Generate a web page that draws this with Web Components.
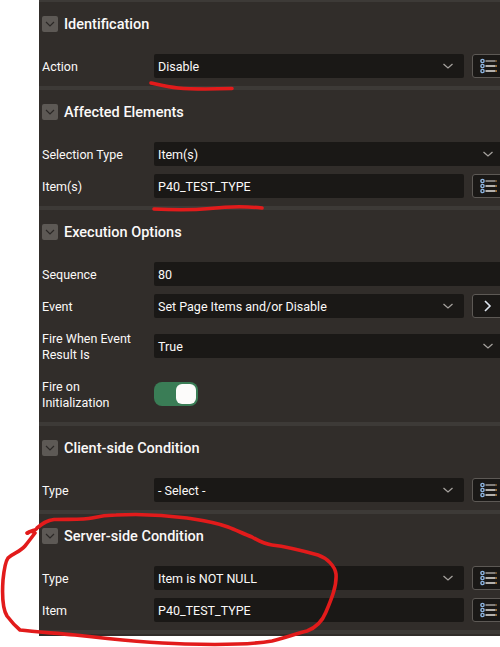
<!DOCTYPE html>
<html lang="en">
<head>
<meta charset="utf-8">
<title>Property Editor</title>
<style>
  html, body { margin: 0; height: 100%; background: #fff; overflow: hidden; }
  body { font-family: Roboto, "Noto Sans", sans-serif; font-size: 12.5px; color: #fbf9f8; position: relative; }
</style>
</head>
<body>
<prop-panel>
  <prop-section title="Identification">
    <prop-row label="Action"><prop-field value="Disable" select action="list"></prop-field></prop-row>
  </prop-section>
  <prop-section title="Affected Elements">
    <prop-row label="Selection Type"><prop-field value="Item(s)" select></prop-field></prop-row>
    <prop-row label="Item(s)"><prop-field value="P40_TEST_TYPE" action="list"></prop-field></prop-row>
  </prop-section>
  <prop-section title="Execution Options">
    <prop-row label="Sequence"><prop-field value="80"></prop-field></prop-row>
    <prop-row label="Event"><prop-field value="Set Page Items and/or Disable" select action="more"></prop-field></prop-row>
    <prop-row tall label="Fire When Event Result Is"><prop-field value="True" select></prop-field></prop-row>
    <prop-row tall label="Fire on Initialization"><prop-switch></prop-switch></prop-row>
  </prop-section>
  <prop-section title="Client-side Condition">
    <prop-row label="Type"><prop-field value="- Select -" select action="list"></prop-field></prop-row>
  </prop-section>
  <prop-section title="Server-side Condition">
    <prop-row label="Type"><prop-field value="Item is NOT NULL" select action="list"></prop-field></prop-row>
    <prop-row label="Item"><prop-field value="P40_TEST_TYPE" action="list"></prop-field></prop-row>
  </prop-section>
</prop-panel>
<red-marks></red-marks>

<script>
class PropPanel extends HTMLElement {
  constructor() {
    super();
    this.attachShadow({ mode: 'open' });
    this.shadowRoot.innerHTML = `
      <style>
        :host {
          display: block;
          width: 465px;
          height: 636px;
          margin-left: 39px;
          background: #312d2a;
          border-top: 2px solid #3d3a37;
          box-sizing: border-box;
        }
      </style>
      <slot></slot>
    `;
  }
}

class PropSection extends HTMLElement {
  constructor() {
    super();
    this.attachShadow({ mode: 'open' });
  }

  connectedCallback() {
    this.shadowRoot.innerHTML = `
      <style>
        :host {
          display: block;
          padding-bottom: 4px;
          border-bottom: 4px solid #3d3a37;
        }
        header {
          display: flex;
          align-items: center;
          gap: 6px;
          height: 16px;
          padding: 14px 0 18px 3px;
        }
        .toggle {
          width: 16px;
          height: 16px;
          border-radius: 2px;
          background: #5d5955;
          display: flex;
          align-items: center;
          justify-content: center;
        }
        h2 {
          margin: 0;
          padding-top: 2px;
          font-size: 14.5px;
          line-height: 16px;
          font-weight: 500;
          color: #fbf9f8;
        }
      </style>
      <header>
        <div class="toggle">
          <svg width="16" height="16" viewBox="0 0 16 16" fill="none" stroke="#2b2826" stroke-width="1.2">
            <path d="M4 6l4 4 4-4"/>
          </svg>
        </div>
        <h2>${this.getAttribute('title')}</h2>
      </header>
      <slot></slot>
    `;
  }
}

class PropRow extends HTMLElement {
  constructor() {
    super();
    this.attachShadow({ mode: 'open' });
  }

  connectedCallback() {
    this.shadowRoot.innerHTML = `
      <style>
        :host {
          display: flex;
          align-items: center;
          padding: 4px 0 4px 3px;
        }
        :host([tall]) { min-height: 40px; }
        label {
          flex: 0 0 112px;
          width: 112px;
          padding: 2px 8px 0 0;
          line-height: 16px;
          box-sizing: border-box;
        }
        .control { flex: 1; min-width: 0; }
      </style>
      <label>${this.getAttribute('label')}</label>
      <div class="control"><slot></slot></div>
    `;
  }
}

class PropField extends HTMLElement {
  constructor() {
    super();
    this.attachShadow({ mode: 'open' });
  }

  connectedCallback() {
    const action = this.getAttribute('action');
    this.shadowRoot.innerHTML = `
      <style>
        :host { display: flex; gap: 8px; height: 24px; }
        .input {
          flex: 1;
          display: flex;
          align-items: center;
          justify-content: space-between;
          padding: 0 10px 0 4px;
          background: #1a1816;
          border-radius: 2px;
        }
        svg { display: block; flex: none; }
        button {
          flex: 0 0 32px;
          width: 32px;
          height: 24px;
          padding: 0 0 0 7px;
          background: #1a1816;
          border: 1px solid #5d5955;
          border-radius: 3px;
          box-sizing: border-box;
        }
      </style>
      <div class="input">
        <span>${this.getAttribute('value')}</span>
        ${this.hasAttribute('select') ? this._chevron() : ''}
      </div>
      ${action ? `<button aria-label="${action}">${action === 'list' ? this._listIcon() : this._moreIcon()}</button>` : ''}
    `;
  }

  _chevron() {
    return `<svg width="12" height="12" viewBox="0 0 12 12" fill="none" stroke="#a5a19d" stroke-width="1.3">
      <path d="M1.500 4L6 8l4.500-4"/>
    </svg>`;
  }

  _listIcon() {
    const rows = [3, 8, 13].map((y) => `
      <circle cx="2.500" cy="${y}" r="1.600" stroke="#8fb6e2" stroke-width="1.400" fill="#1a1816"/>
      <path d="M5.500 ${y}h10" stroke="#e8e4e0" stroke-width="${y === 3 ? 1 : 1.500}"/>
      <path d="M15.500 ${y}h1.500" stroke="#c98a3c" stroke-width="${y === 3 ? 1 : 1.500}"/>
    `).join('');
    return `<svg width="17" height="16" viewBox="0 0 17 16">${rows}</svg>`;
  }

  _moreIcon() {
    return `<svg width="16" height="16" viewBox="0 0 16 16" fill="none" stroke="#dfe6f0" stroke-width="1.600">
      <path d="M5 3l5 5-5 5"/>
    </svg>`;
  }
}

class PropSwitch extends HTMLElement {
  constructor() {
    super();
    this.attachShadow({ mode: 'open' });
    this.shadowRoot.innerHTML = `
      <style>
        :host {
          display: flex;
          justify-content: flex-end;
          align-items: center;
          width: 44px;
          height: 24px;
          padding: 2px;
          box-sizing: border-box;
          background: #3a7d56;
          border-radius: 8px;
        }
        span {
          width: 20px;
          height: 20px;
          border-radius: 6px;
          background: #fcfbfa;
        }
      </style>
      <span></span>
    `;
  }
}

// the red pen strokes drawn on top of the screenshot
class RedMarks extends HTMLElement {
  constructor() {
    super();
    this.attachShadow({ mode: 'open' });
    this.shadowRoot.innerHTML = `
      <style>
        :host { position: absolute; left: 0; top: 0; pointer-events: none; }
        svg { display: block; }
        path { fill: none; stroke: #e21b1b; stroke-width: 3.600; stroke-linecap: round; stroke-linejoin: round; }
      </style>
      <svg width="500" height="647" viewBox="0 0 500 647">
        <path d="M151 83C160 85 168 87 178 88C195 89.500 215 89 232 88.500"/>
        <path d="M154 209C172 210 195 210 210 208.500C228 206.500 248 206.500 262 208"/>
        <path d="M28 533C31 530 36 531 37 528C42 524 47 520 54 519.500C68 519 84 520 92 518C100 516 106 515 116 515C135 514 165 515 187 518C200 520 215 522 228 527C236 530 244 534 252 537C259 541 264 544 272 545C285 546.500 300 550 318 555C327 558 335 566 336 574C337 586 331 600 326 612C322 622 315 628 307 631C295 634 285 638 272 641C255 644 220 645 185 644C150 643 110 639 75 635C55 633 35 632 20 630C14 625 10 620 7 616C2 608 2 595 3 580C4 570 5 562 8 558C13 553 20 552 25 546C29 541 32 537 35 533C33 531 30 531 27 533"/>
      </svg>
    `;
  }
}

customElements.define('prop-panel', PropPanel);
customElements.define('prop-section', PropSection);
customElements.define('prop-row', PropRow);
customElements.define('prop-field', PropField);
customElements.define('prop-switch', PropSwitch);
customElements.define('red-marks', RedMarks);
</script>
</body>
</html>
